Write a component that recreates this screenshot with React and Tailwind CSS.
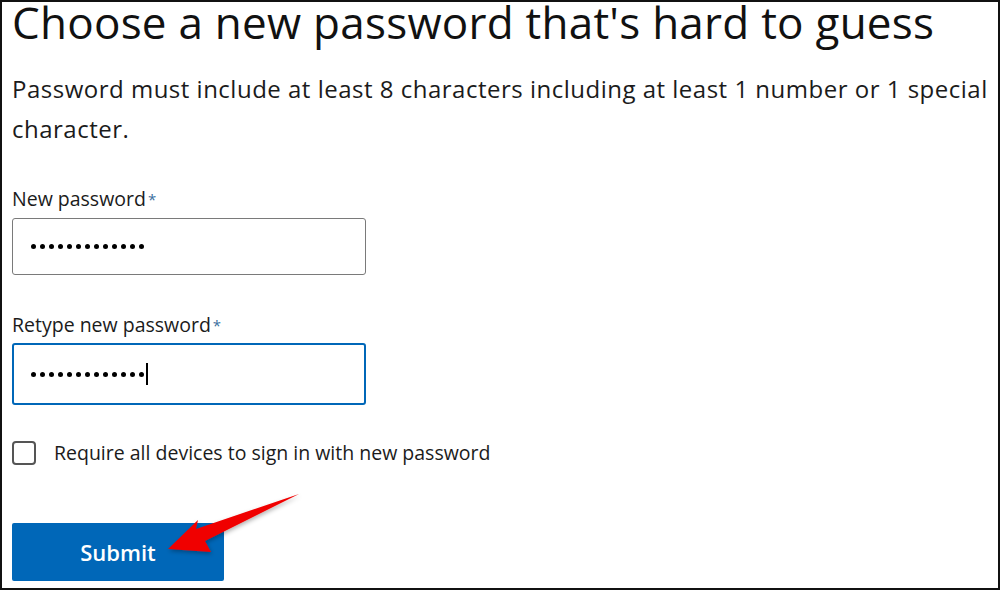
import React from 'react'

const font = { fontFamily: '"Open Sans", "Noto Sans", "Liberation Sans", sans-serif' }

// masked password characters, drawn as round dots
function Dots() {
  return (
    <div className="flex items-center gap-[4px]">
      {Array.from({ length: 13 }).map((_, i) => (
        <span key={i} className="w-[5px] h-[5px] rounded-full bg-black"></span>
      ))}
    </div>
  )
}

function Field({ label, focused }) {
  return (
    <div>
      <label className="block text-[19.5px] leading-[24px] text-[#1b1b1b]">
        {label}
        <span className="ml-[2px] text-[15px] align-top text-[#3a6f9e]">*</span>
      </label>
      <div
        className={
          focused
            ? 'mt-[6px] w-[354px] h-[62px] rounded-[3px] border-2 border-[#0067b8] flex items-center pl-[17px]'
            : 'mt-[7px] w-[354px] h-[57px] rounded-[3px] border border-[#7a7a7a] flex items-center pl-[18px]'
        }
      >
        <Dots />
        {focused && <span className="ml-[2px] w-[1.5px] h-[22px] bg-black"></span>}
      </div>
    </div>
  )
}

export default function App() {
  return (
    <div
      className="relative w-[1000px] h-[590px] overflow-hidden bg-white shadow-[inset_0_0_0_2px_#111]"
      style={font}
    >
      <div className="pl-[12px]">
        <h1 className="text-[44px] leading-[44px] tracking-[0.25px] text-[#111] whitespace-nowrap">
          Choose a new password that's hard to guess
        </h1>

        <p className="mt-[25px] w-[978px] text-[24px] leading-[40px] tracking-[0.5px] text-[#1b1b1b]">
          Password must include at least 8 characters including at least 1 number or 1 special character.
        </p>

        <div className="mt-[38px]">
          <Field label="New password" />
        </div>
        <div className="mt-[38px]">
          <Field label="Retype new password" focused />
        </div>

        {/* Sign-out-everywhere option */}
        <div className="mt-[33px] flex items-center">
          <span className="w-[24px] h-[24px] rounded-[4px] border-2 border-[#555]"></span>
          <span className="ml-[18px] text-[19.5px] text-[#1b1b1b]">
            Require all devices to sign in with new password
          </span>
        </div>

        <button className="mt-[56px] w-[212px] h-[58px] rounded-[2px] bg-[#0067b8] text-white text-[22px] font-semibold">
          Submit
        </button>
      </div>

      {/* Red callout arrow over the button */}
      <svg
        className="absolute left-0 top-0 pointer-events-none"
        width="1000"
        height="590"
        viewBox="0 0 1000 590"
      >
        <defs>
          <filter id="arrowShadow" x="-20%" y="-20%" width="140%" height="140%">
            <feDropShadow dx="1" dy="2" stdDeviation="2" floodColor="#000" floodOpacity="0.3" />
          </filter>
        </defs>
        <polygon
          points="168,549 198,520 196,529 299,494 205,541 211,552"
          fill="#f00000"
          filter="url(#arrowShadow)"
        />
      </svg>
    </div>
  )
}
